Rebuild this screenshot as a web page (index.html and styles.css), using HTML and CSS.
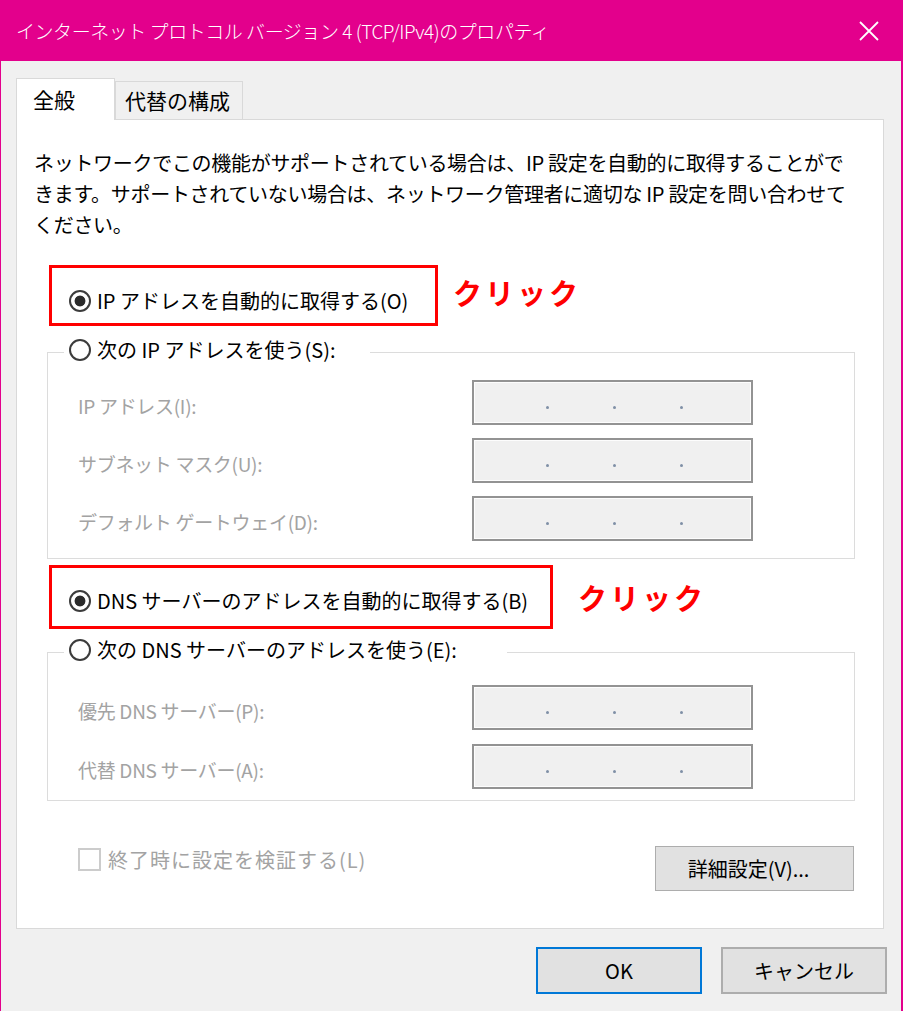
FILE: index.html
```html
<!DOCTYPE html>
<html lang="ja">
<head>
<meta charset="utf-8">
<title>インターネット プロトコル バージョン 4 (TCP/IPv4)のプロパティ</title>
<link rel="stylesheet" href="styles.css">
</head>
<body>
<div class="window">
  <div class="titlebar">
    <span class="title">インターネット プロトコル バージョン 4 (TCP/IPv4)のプロパティ</span>
    <svg class="close" width="20" height="20" viewBox="0 0 20 20" aria-hidden="true">
      <path d="M1 1 L19 19 M19 1 L1 19" stroke="#fff" stroke-width="1.8" fill="none"/>
    </svg>
  </div>
  <div class="body">
    <div class="tabs">
      <div class="tab tab-active">全般</div>
      <div class="tab">代替の構成</div>
    </div>
    <div class="panel">
      <p class="desc">ネットワークでこの機能がサポートされている場合は、IP 設定を自動的に取得することがで<br>きます。サポートされていない場合は、ネットワーク管理者に適切な IP 設定を問い合わせて<br>ください。</p>

      <div class="callout callout-1">
        <div class="highlight hl-1">
          <span class="option"><span class="radio radio-on"></span>IP アドレスを自動的に取得する(O)</span>
        </div>
        <span class="click">クリック</span>
      </div>

      <fieldset class="group group-1">
        <legend class="legend"><span class="option"><span class="radio"></span>次の IP アドレスを使う(S):</span></legend>
        <div class="fields">
          <span class="field-label">IP アドレス(I):</span>
          <span class="ipbox"><i class="dot"></i><i class="dot"></i><i class="dot"></i></span>
          <span class="field-label">サブネット マスク(U):</span>
          <span class="ipbox"><i class="dot"></i><i class="dot"></i><i class="dot"></i></span>
          <span class="field-label">デフォルト ゲートウェイ(D):</span>
          <span class="ipbox"><i class="dot"></i><i class="dot"></i><i class="dot"></i></span>
        </div>
      </fieldset>

      <div class="callout callout-2">
        <div class="highlight hl-2">
          <span class="option"><span class="radio radio-on"></span>DNS サーバーのアドレスを自動的に取得する(B)</span>
        </div>
        <span class="click">クリック</span>
      </div>

      <fieldset class="group group-2">
        <legend class="legend"><span class="option"><span class="radio"></span>次の DNS サーバーのアドレスを使う(E):</span></legend>
        <div class="fields">
          <span class="field-label">優先 DNS サーバー(P):</span>
          <span class="ipbox"><i class="dot"></i><i class="dot"></i><i class="dot"></i></span>
          <span class="field-label">代替 DNS サーバー(A):</span>
          <span class="ipbox"><i class="dot"></i><i class="dot"></i><i class="dot"></i></span>
        </div>
      </fieldset>

      <div class="panel-footer">
        <span class="check-row"><span class="checkbox"></span>終了時に設定を検証する(L)</span>
        <span class="btn btn-advanced">詳細設定(V)...</span>
      </div>
    </div>
    <div class="dialog-buttons">
      <span class="btn btn-dialog btn-default">OK</span>
      <span class="btn btn-dialog">キャンセル</span>
    </div>
  </div>
</div>
</body>
</html>
```

FILE: styles.css
```css
* { box-sizing: border-box; }

html, body {
  margin: 0;
  padding: 0;
}

body {
  font-family: "Noto Sans CJK JP", "Noto Sans", sans-serif;
  font-size: 20px;
  color: #000;
  background: #f0f0f0;
}

.window {
  width: 903px;
  height: 1011px;
  border-left: 1px solid #e3008c;
  border-right: 2px solid #e3008c;
  background: #f0f0f0;
  overflow: hidden;
}

/* title bar */
.titlebar {
  height: 61px;
  background: #e3008c;
  color: #fff;
  display: flex;
  align-items: center;
  justify-content: space-between;
  padding: 0 22px 0 15px;
}

.title {
  font-size: 19px;
  font-weight: 300;
  line-height: 26px;
  letter-spacing: -0.45px;
}

.close {
  display: block;
  margin-top: 1px;
}

/* body */
.body {
  padding: 17px 14px 0 15px;
}

.tabs {
  display: flex;
  align-items: flex-end;
  height: 41px;
}

.tab {
  height: 38px;
  border: 1px solid #d9d9d9;
  border-bottom: none;
  background: #f0f0f0;
  padding: 0 12px 0 9px;
  display: flex;
  align-items: center;
  font-size: 21px;
  line-height: 1;
  color: #000;
}

.tab-active {
  height: 42px;
  width: 99px;
  margin-bottom: -1px;
  background: #fff;
  padding-left: 16px;
  position: relative;
  z-index: 1;
}

.panel {
  height: 810px;
  margin-right: 3px;
  background: #fff;
  border: 1px solid #d9d9d9;
}

.desc {
  margin: 27px 0 0 17px;
  line-height: 31px;
  letter-spacing: -0.3px;
}

/* callouts with red highlight */
.callout {
  display: flex;
  align-items: flex-start;
  margin-left: 32px;
}

.callout-1 { margin-top: 25px; }
.callout-2 { margin-top: 6px; }

.highlight {
  border: 3px solid #ff0000;
  padding: 20px 0 9px 17px;
}

.hl-1 { width: 389px; }
.hl-2 { width: 504px; padding-bottom: 12px; }

.click {
  color: #ff0000;
  font-weight: 700;
  font-size: 29px;
  line-height: 40px;
  letter-spacing: 3px;
}

.callout-1 .click { margin: 7px 0 0 15px; }
.callout-2 .click { margin: 12px 0 0 25px; }

.option {
  display: flex;
  align-items: center;
  gap: 6px;
  height: 26px;
  line-height: 26px;
  white-space: nowrap;
}

.radio {
  flex: none;
  width: 22px;
  height: 22px;
  border: 2px solid #3c3c3c;
  border-radius: 50%;
  background: #fff;
}

.radio-on {
  background: radial-gradient(circle, #2b2b2b 0 5px, #fff 5.8px);
}

/* group boxes */
.group {
  margin: 0 0 0 30px;
  width: 808px;
  padding: 0;
  border: 1px solid #dcdcdc;
}

.group-1 { margin-top: 11px; }
.group-2 { margin-top: 8px; }

.legend {
  padding: 0 0 4px 5px;
  margin-left: 16px;
}

.group-1 .legend { width: 306px; }
.group-2 .legend { width: 443px; }

.fields {
  display: grid;
  grid-template-columns: 394px 281px;
  row-gap: 13px;
  align-items: center;
  padding: 13px 0 17px 30px;
}

.group-2 .fields {
  padding-top: 18px;
  padding-bottom: 11px;
  row-gap: 14px;
}

.field-label {
  color: #a3a3a3;
  font-size: 19px;
  padding-top: 5px;
  letter-spacing: -0.3px;
}

.ipbox {
  height: 45px;
  border: 2px solid #939393;
  box-shadow: inset 0 0 0 1px #fdfdfd;
  background: #f0f0f0;
  display: flex;
  align-items: flex-start;
  gap: 64px;
  padding: 24px 0 0 72px;
}

.dot {
  width: 3px;
  height: 3px;
  border-radius: 50%;
  background: #7f8fa6;
}

/* footer inside panel */
.panel-footer {
  display: flex;
  justify-content: space-between;
  align-items: flex-start;
  margin-top: 45px;
  padding: 0 29px 0 61px;
}

.check-row {
  display: flex;
  align-items: center;
  gap: 7px;
  color: #a3a3a3;
  height: 26px;
  letter-spacing: 1px;
}

.checkbox {
  width: 23px;
  height: 23px;
  border: 2px solid #cccccc;
  background: #fff;
}

.btn {
  display: flex;
  align-items: center;
  justify-content: center;
  background: #e1e1e1;
  border: 1px solid #adadad;
  color: #000;
  line-height: 1;
}

.btn-advanced {
  width: 199px;
  height: 45px;
  padding-right: 12px;
}

/* dialog buttons */
.dialog-buttons {
  display: flex;
  justify-content: flex-end;
  gap: 19px;
  margin-top: 18px;
}

.btn-dialog {
  width: 166px;
  height: 47px;
  border-width: 2px;
  border-color: #adadad;
}

.btn-default {
  border-color: #0078d7;
}
```
